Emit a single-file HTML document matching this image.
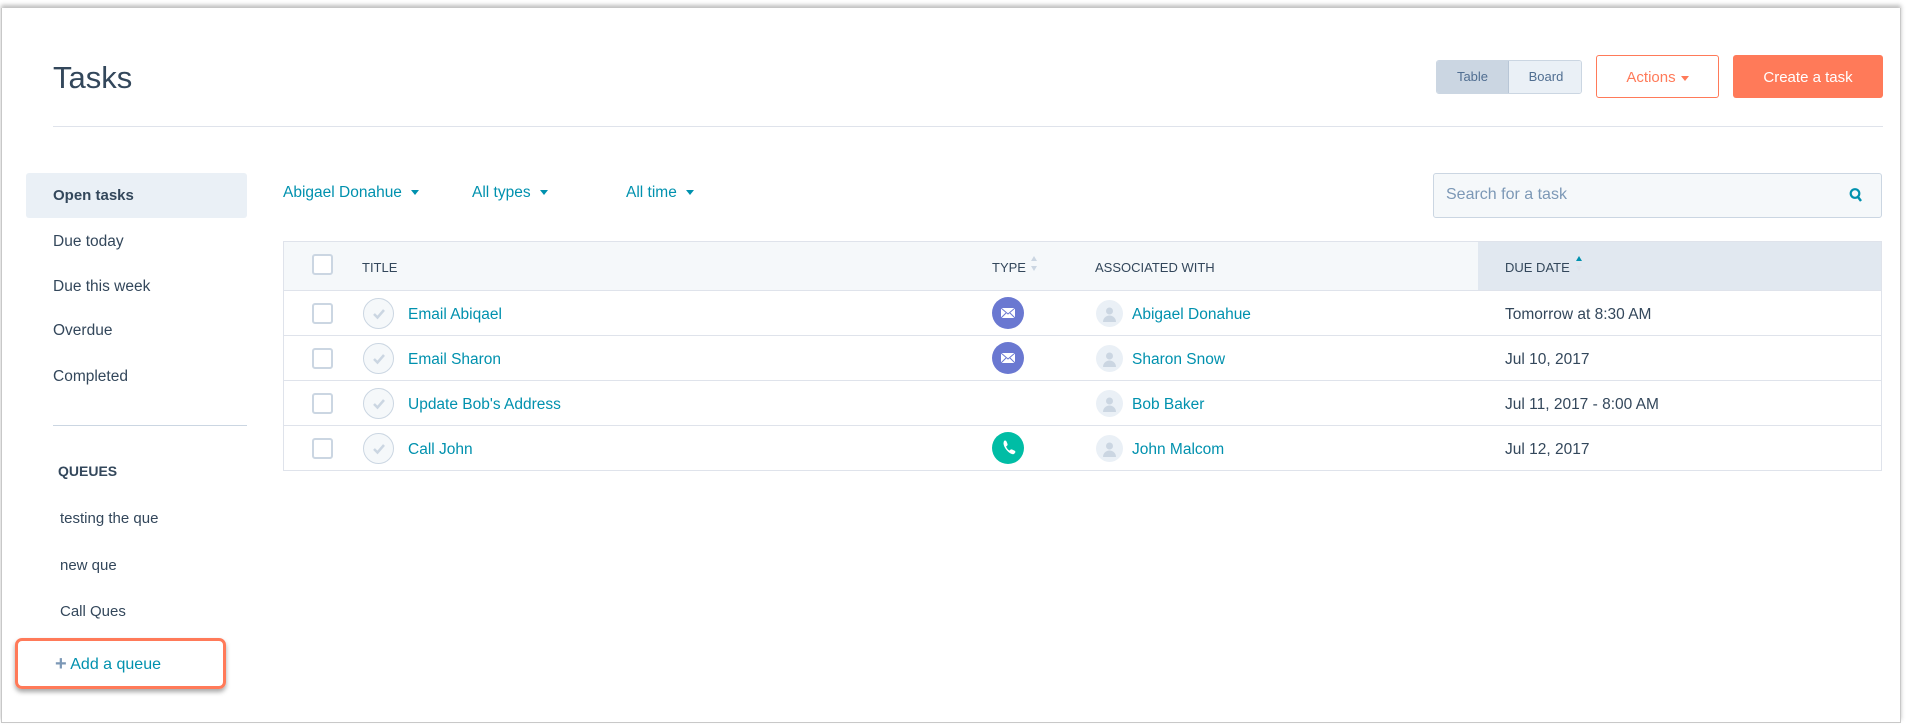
<!DOCTYPE html>
<html><head><meta charset="utf-8"><style>
*{box-sizing:border-box;margin:0;padding:0}
body{width:1906px;height:727px;background:#fff;font-family:"Liberation Sans",sans-serif;color:#33475b;position:relative;overflow:hidden}
.a{position:absolute;white-space:nowrap}
.frame{position:absolute;left:1px;top:8px;width:1900px;height:715px;border:1px solid #c8c8c8;border-top:none;box-shadow:0 -3px 4px rgba(0,0,0,.25)}
.link{color:#0091ae}
.nav{font-size:15.5px;left:53px}
.caret{display:inline-block;width:0;height:0;border-left:4px solid transparent;border-right:4px solid transparent;border-top:5px solid #0091ae;margin-left:9px;vertical-align:middle}
.hdr{font-size:13px;letter-spacing:0;color:#33475b}
.row{position:absolute;left:283px;width:1599px;height:45px;border-bottom:1px solid #dfe3eb}
.cb{position:absolute;left:29px;top:12px;width:21px;height:21px;border:2px solid #cbd6e2;border-radius:3px;background:#fff}
.ck{position:absolute;left:80px;top:7px;width:31px;height:31px;border-radius:50%;border:1px solid #cbd6e2;background:#f5f8fa}
.ck svg{position:absolute;left:8px;top:8px}
.t{position:absolute;left:125px;top:15px;font-size:15.5px;color:#0091ae}
.ty{position:absolute;left:709px;top:6px;width:32px;height:32px;border-radius:50%}
.av{position:absolute;left:813px;top:9px;width:27px;height:27px;border-radius:50%;background:#eaf0f6}
.nm{position:absolute;left:849px;top:15px;font-size:15.5px;color:#0091ae}
.dd{position:absolute;left:1222px;top:15px;font-size:15.5px;color:#33475b}
</style></head><body>
<div class="frame"></div>
<div class="a" style="left:53px;top:60px;font-size:31px;font-weight:300;color:#33475b">Tasks</div>
<div class="a" style="left:1436px;top:60px;width:146px;height:34px;border:1px solid #cbd6e2;border-radius:3px;overflow:hidden;font-size:13px">
<div class="a" style="left:0;top:0;width:72px;height:32px;background:#cbd6e2;border-right:1px solid #b8c6d6;text-align:center;line-height:32px;color:#506e91">Table</div>
<div class="a" style="left:72px;top:0;width:74px;height:32px;background:#eaf0f6;text-align:center;line-height:32px;color:#506e91">Board</div></div>
<div class="a" style="left:1596px;top:55px;width:123px;height:43px;border:1px solid #ff7a59;border-radius:3px;text-align:center;line-height:43px;font-size:15px;color:#ff7a59">Actions<span class="caret" style="border-top-color:#ff7a59;margin-left:5px"></span></div>
<div class="a" style="left:1733px;top:55px;width:150px;height:43px;background:#ff7a59;border-radius:3px;text-align:center;line-height:45px;font-size:15px;color:#fff">Create a task</div>
<div class="a" style="left:53px;top:126px;width:1830px;height:1px;background:#dfe3eb"></div>

<div class="a" style="left:26px;top:173px;width:221px;height:45px;background:#eaf0f6;border-radius:3px"></div>
<div class="a nav" style="top:187px;font-weight:bold;font-size:15px">Open tasks</div>
<div class="a nav" style="top:233px">Due today</div>
<div class="a nav" style="top:278px">Due this week</div>
<div class="a nav" style="top:322px">Overdue</div>
<div class="a nav" style="top:368px">Completed</div>
<div class="a" style="left:53px;top:425px;width:194px;height:1px;background:#cbd6e2"></div>
<div class="a" style="left:58px;top:463px;font-size:14px;font-weight:bold">QUEUES</div>
<div class="a nav" style="left:60px;top:510px;font-size:15px">testing the que</div>
<div class="a nav" style="left:60px;top:557px;font-size:15px">new que</div>
<div class="a nav" style="left:60px;top:603px;font-size:15px">Call Ques</div>
<div class="a" style="left:15px;top:638px;width:211px;height:51px;border:3px solid #ff7a59;border-radius:7px;box-shadow:0 3px 5px rgba(0,0,0,.35)"></div>
<div class="a" style="left:55px;top:653px;font-size:16px;color:#0091ae"><span style="color:#7c98b6;font-weight:bold;font-size:20px;vertical-align:-1px">+</span> Add a queue</div>

<div class="a link" style="left:283px;top:184px;font-size:15.5px">Abigael Donahue<span class="caret"></span></div>
<div class="a link" style="left:472px;top:184px;font-size:15.5px">All types<span class="caret"></span></div>
<div class="a link" style="left:626px;top:184px;font-size:15.5px">All time<span class="caret"></span></div>
<div class="a" style="left:1433px;top:173px;width:449px;height:45px;background:#f5f8fa;border:1px solid #cbd6e2;border-radius:3px"></div>
<div class="a" style="left:1446px;top:186px;font-size:16px;color:#7c98b6">Search for a task</div>
<svg class="a" style="left:1849px;top:187px" width="14" height="16" viewBox="0 0 14 16"><circle cx="6" cy="6.5" r="4.3" fill="none" stroke="#0091ae" stroke-width="2.2"/><path d="M9 10l3 4" stroke="#0091ae" stroke-width="2.4"/></svg>

<div class="a" style="left:283px;top:241px;width:1599px;height:230px;border:1px solid #dfe3eb"></div>
<div class="a" style="left:283px;top:241px;width:1599px;height:50px;background:#f5f8fa;border:1px solid #dfe3eb"></div>
<div class="a" style="left:1478px;top:242px;width:403px;height:48px;background:#e1e8f0"></div>
<div class="a" style="left:312px;top:254px;width:21px;height:21px;border:2px solid #cbd6e2;border-radius:3px;background:#fff"></div>
<div class="a hdr" style="left:362px;top:260px">TITLE</div>
<div class="a hdr" style="left:992px;top:260px">TYPE</div>
<svg class="a" style="left:1030px;top:255px" width="8" height="17"><path d="M4 1L7 6H1z M4 16L7 11H1z" fill="#cbd6e2"/></svg>
<div class="a hdr" style="left:1095px;top:260px">ASSOCIATED WITH</div>
<div class="a hdr" style="left:1505px;top:260px">DUE DATE</div>
<svg class="a" style="left:1575px;top:255px" width="8" height="17"><path d="M4 1L7 6H1z" fill="#0091ae"/><path d="M4 16L7 11H1z" fill="#dfe3eb"/></svg>

<div class="row" style="top:291px"><div class="cb"></div><div class="ck"><svg width="14" height="14" viewBox="0 0 14 14"><path d="M2 7l3.5 3.5L12 3" fill="none" stroke="#cbd6e2" stroke-width="2.5"/></svg></div><div class="t">Email Abiqael</div>
<div class="ty" style="background:#6a78d1"><svg width="32" height="32"><rect x="9" y="11" width="14" height="10" fill="#fff"/><path d="M9 11l7 6 7-6M9 21l5-5M23 21l-5-5" fill="none" stroke="#6a78d1" stroke-width="1"/></svg></div>
<div class="av"><svg width="27" height="27"><circle cx="13.5" cy="11" r="3.5" fill="#cbd6e2"/><path d="M7 22a6.5 6.5 0 0113 0z" fill="#cbd6e2"/></svg></div><div class="nm">Abigael Donahue</div><div class="dd">Tomorrow at 8:30 AM</div></div>

<div class="row" style="top:336px"><div class="cb"></div><div class="ck"><svg width="14" height="14" viewBox="0 0 14 14"><path d="M2 7l3.5 3.5L12 3" fill="none" stroke="#cbd6e2" stroke-width="2.5"/></svg></div><div class="t">Email Sharon</div>
<div class="ty" style="background:#6a78d1"><svg width="32" height="32"><rect x="9" y="11" width="14" height="10" fill="#fff"/><path d="M9 11l7 6 7-6M9 21l5-5M23 21l-5-5" fill="none" stroke="#6a78d1" stroke-width="1"/></svg></div>
<div class="av"><svg width="27" height="27"><circle cx="13.5" cy="11" r="3.5" fill="#cbd6e2"/><path d="M7 22a6.5 6.5 0 0113 0z" fill="#cbd6e2"/></svg></div><div class="nm">Sharon Snow</div><div class="dd">Jul 10, 2017</div></div>

<div class="row" style="top:381px"><div class="cb"></div><div class="ck"><svg width="14" height="14" viewBox="0 0 14 14"><path d="M2 7l3.5 3.5L12 3" fill="none" stroke="#cbd6e2" stroke-width="2.5"/></svg></div><div class="t">Update Bob's Address</div>
<div class="av"><svg width="27" height="27"><circle cx="13.5" cy="11" r="3.5" fill="#cbd6e2"/><path d="M7 22a6.5 6.5 0 0113 0z" fill="#cbd6e2"/></svg></div><div class="nm">Bob Baker</div><div class="dd">Jul 11, 2017 - 8:00 AM</div></div>

<div class="row" style="top:426px;border-bottom:none"><div class="cb"></div><div class="ck"><svg width="14" height="14" viewBox="0 0 14 14"><path d="M2 7l3.5 3.5L12 3" fill="none" stroke="#cbd6e2" stroke-width="2.5"/></svg></div><div class="t">Call John</div>
<div class="ty" style="background:#00bda5"><svg width="32" height="32" viewBox="0 0 32 32"><path d="M12 9c1-1 2-.5 2.5.5l1 2.5c.3.8 0 1.4-.6 1.9l-.8.6c.6 1.8 1.8 3.2 3.4 4.1l.7-.7c.5-.5 1.2-.7 1.9-.4l2.4 1.1c1 .5 1.2 1.5.5 2.3l-1 1.1c-3 1.5-10.5-5.5-10.5-11z" fill="#fff"/></svg></div>
<div class="av"><svg width="27" height="27"><circle cx="13.5" cy="11" r="3.5" fill="#cbd6e2"/><path d="M7 22a6.5 6.5 0 0113 0z" fill="#cbd6e2"/></svg></div><div class="nm">John Malcom</div><div class="dd">Jul 12, 2017</div></div>
</body></html>
